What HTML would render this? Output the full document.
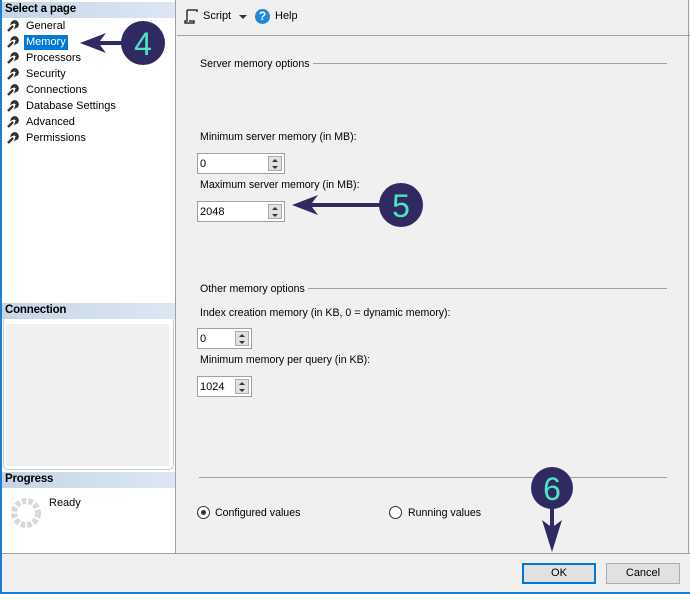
<!DOCTYPE html>
<html><head><style>
*{box-sizing:border-box;margin:0;padding:0}
body{width:690px;height:594px;position:relative;background:#f0f0f0;font-family:"Liberation Sans",sans-serif;font-size:10.6px;color:#000;overflow:hidden}
.abs{position:absolute}
.hdr{position:absolute;left:2px;width:173px;height:16px;background:linear-gradient(90deg,#c5d5e6,#dce7f3);font-weight:bold;font-size:11.5px;padding:1px 3px;letter-spacing:-0.2px}
.item{position:absolute;left:7px;height:15px;line-height:15px}
.item span{position:absolute;left:17px;top:0;white-space:nowrap;padding:0 2px;font-size:11px}
.spin{position:absolute;background:#fff;border:1px solid #a0a0a0;height:21px;padding:4px 2px;font-size:11px}
.spin .b{position:absolute;right:2px;top:2px;width:14px;height:15px;border:1px solid #adadad;background:#e1e1e1}
.spin .b:before{content:"";position:absolute;left:3px;top:2px;border:3px solid transparent;border-bottom:3px solid #333;border-top:0}
.spin .b:after{content:"";position:absolute;left:3px;top:9px;border:3px solid transparent;border-top:3px solid #333;border-bottom:0}
.line{position:absolute;height:1px;background:#a0a0a0}
.btn{position:absolute;height:21px;background:#e1e1e1;border:1px solid #adadad;text-align:center;line-height:19px;font-size:11px}
.radio{position:absolute;width:13px;height:13px;border:1px solid #333;border-radius:50%;background:#fff}
</style></head><body>
<div class="abs" style="left:0;top:0;width:2px;height:594px;background:#1a7fd4"></div>
<div class="abs" style="left:0;top:592px;width:690px;height:2px;background:#1a7fd4"></div>
<div class="abs" style="left:2px;top:0;width:174px;height:553px;background:#fff;border-right:1px solid #a0a0a0"></div>
<div class="hdr" style="top:2px">Select a page</div>
<svg width="0" height="0" style="position:absolute"><defs><symbol id="w" viewBox="0 0 12 12"><path d="M1 11 L6 6 M5 3 a3 3 0 1 1 4 4 L10 4 L8 2 Z" stroke="#333" stroke-width="2.3" fill="#333"/></symbol></defs></svg>
<div class="item" style="top:19px"><svg width="12" height="12" style="margin-top:1px"><use href="#w"/></svg><span>General</span></div>
<div class="item" style="top:35px"><svg width="12" height="12" style="margin-top:1px"><use href="#w"/></svg><span style="background:#0078d7;color:#fff">Memory</span></div>
<div class="item" style="top:51px"><svg width="12" height="12" style="margin-top:1px"><use href="#w"/></svg><span>Processors</span></div>
<div class="item" style="top:67px"><svg width="12" height="12" style="margin-top:1px"><use href="#w"/></svg><span>Security</span></div>
<div class="item" style="top:83px"><svg width="12" height="12" style="margin-top:1px"><use href="#w"/></svg><span>Connections</span></div>
<div class="item" style="top:99px"><svg width="12" height="12" style="margin-top:1px"><use href="#w"/></svg><span>Database Settings</span></div>
<div class="item" style="top:115px"><svg width="12" height="12" style="margin-top:1px"><use href="#w"/></svg><span>Advanced</span></div>
<div class="item" style="top:131px"><svg width="12" height="12" style="margin-top:1px"><use href="#w"/></svg><span>Permissions</span></div>
<div class="hdr" style="top:303px">Connection</div>
<div class="abs" style="left:3px;top:319px;width:171px;height:151px;border:1px solid #c8c8c8;border-top:none;border-radius:0 0 5px 5px;background:#fff"></div>
<div class="abs" style="left:6px;top:324px;width:163px;height:142px;background:#f0f0f0"></div>
<div class="hdr" style="top:472px">Progress</div>
<svg class="abs" style="left:10px;top:497px" width="32" height="32" viewBox="0 0 32 32"><circle cx="16" cy="16" r="12" fill="none" stroke="#d8d8d8" stroke-width="6" stroke-dasharray="4.5 2"/></svg>
<div class="abs" style="left:49px;top:497px;font-size:11px">Ready</div>
<!-- toolbar -->
<svg class="abs" style="left:184px;top:9px" width="14" height="15" viewBox="0 0 14 15"><path d="M3 1h10v2M3 1v11H1v2h9v-2H5" fill="none" stroke="#333" stroke-width="1.5"/></svg>
<div class="abs" style="left:203px;top:10px;font-size:11px">Script</div>
<div class="abs" style="left:239px;top:15px;border:4px solid transparent;border-top:4px solid #333;border-bottom:0"></div>
<div class="abs" style="left:255px;top:9px;width:15px;height:15px;border-radius:50%;background:#1e88d8;color:#fff;font-weight:bold;font-size:12px;text-align:center;line-height:15px">?</div>
<div class="abs" style="left:275px;top:10px;font-size:11px">Help</div>
<div class="line" style="left:177px;top:35px;width:513px"></div>
<div class="abs" style="left:688px;top:0;width:1px;height:553px;background:#a0a0a0"></div>
<!-- content -->
<div class="abs" style="left:200px;top:58px">Server memory options</div>
<div class="line" style="left:313px;top:63px;width:354px"></div>
<div class="abs" style="left:200px;top:131px">Minimum server memory (in MB):</div>
<div class="spin" style="left:197px;top:153px;width:88px">0<div class="b"></div></div>
<div class="abs" style="left:200px;top:179px">Maximum server memory (in MB):</div>
<div class="spin" style="left:197px;top:201px;width:88px">2048<div class="b"></div></div>
<div class="abs" style="left:200px;top:283px">Other memory options</div>
<div class="line" style="left:308px;top:288px;width:359px"></div>
<div class="abs" style="left:200px;top:307px">Index creation memory (in KB, 0 = dynamic memory):</div>
<div class="spin" style="left:197px;top:328px;width:55px">0<div class="b"></div></div>
<div class="abs" style="left:200px;top:354px">Minimum memory per query (in KB):</div>
<div class="spin" style="left:197px;top:376px;width:55px">1024<div class="b"></div></div>
<div class="line" style="left:199px;top:477px;width:468px"></div>
<div class="radio" style="left:197px;top:506px"><div class="abs" style="left:3px;top:3px;width:5px;height:5px;border-radius:50%;background:#333"></div></div>
<div class="abs" style="left:215px;top:507px">Configured values</div>
<div class="radio" style="left:389px;top:506px"></div>
<div class="abs" style="left:408px;top:507px">Running values</div>
<div class="line" style="left:2px;top:553px;width:688px"></div>
<div class="btn" style="left:522px;top:563px;width:74px;border:2px solid #0078d7;line-height:17px">OK</div>
<div class="btn" style="left:606px;top:563px;width:74px">Cancel</div>
<!-- callouts -->
<svg class="abs" style="left:0;top:0" width="690" height="594">
<g fill="#2f2a62">
<path d="M80 43 L106 33 L100 41 L130 41 L130 45 L100 45 L106 53 Z"/>
<circle cx="143" cy="43" r="22"/>
<path d="M292 205 L318 195 L312 203 L386 203 L386 207 L312 207 L318 215 Z"/>
<circle cx="401" cy="205" r="22"/>
<path d="M550 500 L554 500 L554 526 L562 520 L552 552 L542 520 L550 526 Z"/>
<circle cx="552" cy="488" r="21"/>
</g>
<g fill="#4fe3c3" font-family="Liberation Sans,sans-serif" font-size="32" text-anchor="middle">
<text x="143" y="55">4</text><text x="401" y="217">5</text><text x="552" y="500">6</text>
</g>
</svg>
</body></html>
